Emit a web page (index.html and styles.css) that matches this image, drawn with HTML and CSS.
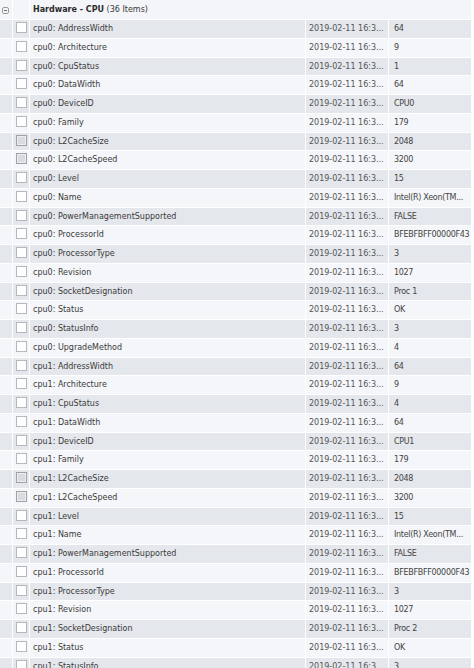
FILE: index.html
```html
<!DOCTYPE html>
<html>
<head>
<meta charset="utf-8">
<link rel="stylesheet" href="styles.css">
</head>
<body>
<div class="grid">
  <div class="row head">
    <div class="c1"><span class="toggle"></span></div>
    <div class="c2"></div>
    <div class="title"><b>Hardware - CPU</b> (36 Items)</div>
  </div>
  <div class="row odd"><div class="c1"></div><div class="c2"><span class="cb"></span></div><div class="name">cpu0: AddressWidth</div><div class="date">2019-02-11 16:3...</div><div class="val">64</div></div>
  <div class="row"><div class="c1"></div><div class="c2"><span class="cb"></span></div><div class="name">cpu0: Architecture</div><div class="date">2019-02-11 16:3...</div><div class="val">9</div></div>
  <div class="row odd"><div class="c1"></div><div class="c2"><span class="cb"></span></div><div class="name">cpu0: CpuStatus</div><div class="date">2019-02-11 16:3...</div><div class="val">1</div></div>
  <div class="row"><div class="c1"></div><div class="c2"><span class="cb"></span></div><div class="name">cpu0: DataWidth</div><div class="date">2019-02-11 16:3...</div><div class="val">64</div></div>
  <div class="row odd"><div class="c1"></div><div class="c2"><span class="cb"></span></div><div class="name">cpu0: DeviceID</div><div class="date">2019-02-11 16:3...</div><div class="val">CPU0</div></div>
  <div class="row"><div class="c1"></div><div class="c2"><span class="cb"></span></div><div class="name">cpu0: Family</div><div class="date">2019-02-11 16:3...</div><div class="val">179</div></div>
  <div class="row odd"><div class="c1"></div><div class="c2"><span class="cb dis"></span></div><div class="name">cpu0: L2CacheSize</div><div class="date">2019-02-11 16:3...</div><div class="val">2048</div></div>
  <div class="row"><div class="c1"></div><div class="c2"><span class="cb dis"></span></div><div class="name">cpu0: L2CacheSpeed</div><div class="date">2019-02-11 16:3...</div><div class="val">3200</div></div>
  <div class="row odd"><div class="c1"></div><div class="c2"><span class="cb"></span></div><div class="name">cpu0: Level</div><div class="date">2019-02-11 16:3...</div><div class="val">15</div></div>
  <div class="row"><div class="c1"></div><div class="c2"><span class="cb"></span></div><div class="name">cpu0: Name</div><div class="date">2019-02-11 16:3...</div><div class="val">Intel(R) Xeon(TM...</div></div>
  <div class="row odd"><div class="c1"></div><div class="c2"><span class="cb"></span></div><div class="name">cpu0: PowerManagementSupported</div><div class="date">2019-02-11 16:3...</div><div class="val">FALSE</div></div>
  <div class="row"><div class="c1"></div><div class="c2"><span class="cb"></span></div><div class="name">cpu0: ProcessorId</div><div class="date">2019-02-11 16:3...</div><div class="val">BFEBFBFF00000F43</div></div>
  <div class="row odd"><div class="c1"></div><div class="c2"><span class="cb"></span></div><div class="name">cpu0: ProcessorType</div><div class="date">2019-02-11 16:3...</div><div class="val">3</div></div>
  <div class="row"><div class="c1"></div><div class="c2"><span class="cb"></span></div><div class="name">cpu0: Revision</div><div class="date">2019-02-11 16:3...</div><div class="val">1027</div></div>
  <div class="row odd"><div class="c1"></div><div class="c2"><span class="cb"></span></div><div class="name">cpu0: SocketDesignation</div><div class="date">2019-02-11 16:3...</div><div class="val">Proc 1</div></div>
  <div class="row"><div class="c1"></div><div class="c2"><span class="cb"></span></div><div class="name">cpu0: Status</div><div class="date">2019-02-11 16:3...</div><div class="val">OK</div></div>
  <div class="row odd"><div class="c1"></div><div class="c2"><span class="cb"></span></div><div class="name">cpu0: StatusInfo</div><div class="date">2019-02-11 16:3...</div><div class="val">3</div></div>
  <div class="row"><div class="c1"></div><div class="c2"><span class="cb"></span></div><div class="name">cpu0: UpgradeMethod</div><div class="date">2019-02-11 16:3...</div><div class="val">4</div></div>
  <div class="row odd"><div class="c1"></div><div class="c2"><span class="cb"></span></div><div class="name">cpu1: AddressWidth</div><div class="date">2019-02-11 16:3...</div><div class="val">64</div></div>
  <div class="row"><div class="c1"></div><div class="c2"><span class="cb"></span></div><div class="name">cpu1: Architecture</div><div class="date">2019-02-11 16:3...</div><div class="val">9</div></div>
  <div class="row odd"><div class="c1"></div><div class="c2"><span class="cb"></span></div><div class="name">cpu1: CpuStatus</div><div class="date">2019-02-11 16:3...</div><div class="val">4</div></div>
  <div class="row"><div class="c1"></div><div class="c2"><span class="cb"></span></div><div class="name">cpu1: DataWidth</div><div class="date">2019-02-11 16:3...</div><div class="val">64</div></div>
  <div class="row odd"><div class="c1"></div><div class="c2"><span class="cb"></span></div><div class="name">cpu1: DeviceID</div><div class="date">2019-02-11 16:3...</div><div class="val">CPU1</div></div>
  <div class="row"><div class="c1"></div><div class="c2"><span class="cb"></span></div><div class="name">cpu1: Family</div><div class="date">2019-02-11 16:3...</div><div class="val">179</div></div>
  <div class="row odd"><div class="c1"></div><div class="c2"><span class="cb dis"></span></div><div class="name">cpu1: L2CacheSize</div><div class="date">2019-02-11 16:3...</div><div class="val">2048</div></div>
  <div class="row"><div class="c1"></div><div class="c2"><span class="cb dis"></span></div><div class="name">cpu1: L2CacheSpeed</div><div class="date">2019-02-11 16:3...</div><div class="val">3200</div></div>
  <div class="row odd"><div class="c1"></div><div class="c2"><span class="cb"></span></div><div class="name">cpu1: Level</div><div class="date">2019-02-11 16:3...</div><div class="val">15</div></div>
  <div class="row"><div class="c1"></div><div class="c2"><span class="cb"></span></div><div class="name">cpu1: Name</div><div class="date">2019-02-11 16:3...</div><div class="val">Intel(R) Xeon(TM...</div></div>
  <div class="row odd"><div class="c1"></div><div class="c2"><span class="cb"></span></div><div class="name">cpu1: PowerManagementSupported</div><div class="date">2019-02-11 16:3...</div><div class="val">FALSE</div></div>
  <div class="row"><div class="c1"></div><div class="c2"><span class="cb"></span></div><div class="name">cpu1: ProcessorId</div><div class="date">2019-02-11 16:3...</div><div class="val">BFEBFBFF00000F43</div></div>
  <div class="row odd"><div class="c1"></div><div class="c2"><span class="cb"></span></div><div class="name">cpu1: ProcessorType</div><div class="date">2019-02-11 16:3...</div><div class="val">3</div></div>
  <div class="row"><div class="c1"></div><div class="c2"><span class="cb"></span></div><div class="name">cpu1: Revision</div><div class="date">2019-02-11 16:3...</div><div class="val">1027</div></div>
  <div class="row odd"><div class="c1"></div><div class="c2"><span class="cb"></span></div><div class="name">cpu1: SocketDesignation</div><div class="date">2019-02-11 16:3...</div><div class="val">Proc 2</div></div>
  <div class="row"><div class="c1"></div><div class="c2"><span class="cb"></span></div><div class="name">cpu1: Status</div><div class="date">2019-02-11 16:3...</div><div class="val">OK</div></div>
  <div class="row odd"><div class="c1"></div><div class="c2"><span class="cb"></span></div><div class="name">cpu1: StatusInfo</div><div class="date">2019-02-11 16:3...</div><div class="val">3</div></div>
  <div class="row"><div class="c1"></div><div class="c2"><span class="cb"></span></div><div class="name">cpu1: UpgradeMethod</div><div class="date">2019-02-11 16:3...</div><div class="val">4</div></div>
</div>
</body>
</html>
```

FILE: styles.css
```css
html, body {
  margin: 0;
  padding: 0;
  background: #ffffff;
}
body {
  font-family: "DejaVu Sans", Verdana, sans-serif;
  font-size: 8px;
  color: #3c3c3c;
}
.grid {
  display: flex;
  flex-direction: column;
  gap: 1px;
  width: 471px;
}
.row {
  display: grid;
  grid-template-columns: 12px 16px 275px 82px 82px;
  column-gap: 1px;
  height: 17.76px;
  flex: none;
}
.row > div {
  background: #f4f6f9;
  line-height: 17.76px;
  white-space: nowrap;
  overflow: hidden;
}
.row.odd > div {
  background: #e4e7ec;
}
.row.head {
  height: 19px;
}
.row.head > div {
  background: #f3f5f8;
  line-height: 19px;
}
.title {
  grid-column: 3 / span 3;
  padding-left: 3px;
  color: #3a3a3a;
}
.title b {
  color: #2b2b2b;
}
.c1 {
  display: flex;
  justify-content: center;
}
.c2 {
  padding-left: 3px;
  padding-top: 2px;
  box-sizing: border-box;
}
.toggle {
  display: block;
  width: 5px;
  height: 5px;
  margin-top: 7px;
  margin-left: -1px;
  border: 1px solid #9a9a9a;
  border-radius: 2px;
  position: relative;
  background: #f7f7f7;
}
.toggle::after {
  content: "";
  position: absolute;
  left: 1px;
  right: 1px;
  top: 2px;
  height: 1px;
  background: #666;
}
.cb {
  display: block;
  width: 9px;
  height: 9px;
  border: 1px solid #b4b8bd;
  background: #ffffff;
}
.cb.dis {
  background: #d9dbde;
  border-color: #9ea2a7;
  box-shadow: inset 0 0 0 1px #eceef0;
}
.name {
  padding-left: 3px;
  color: #3a3a3a;
}
.date {
  padding-left: 3px;
  color: #555;
}
.val {
  padding-left: 5px;
  letter-spacing: -0.3px;
  color: #444;
}
```
